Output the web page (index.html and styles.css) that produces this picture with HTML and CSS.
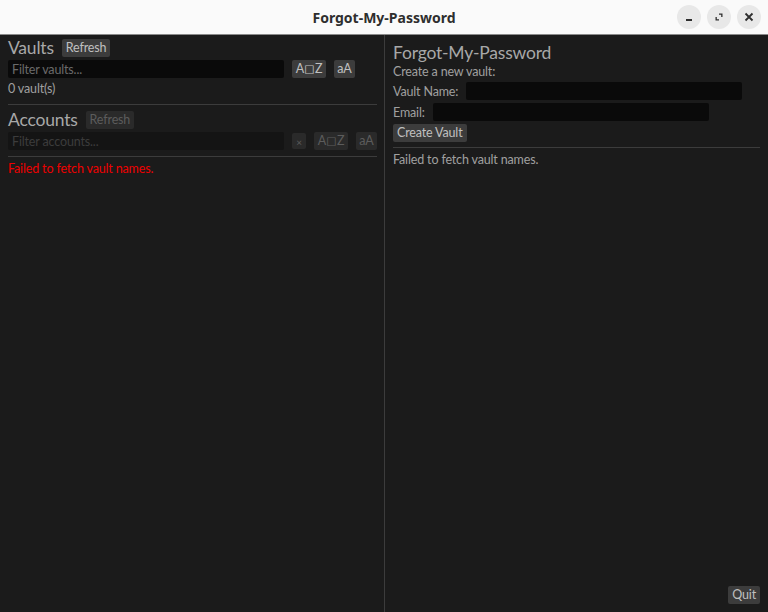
FILE: index.html
```html
<!DOCTYPE html>
<html>
   <head>
      <meta name="viewport" content="width=device-width, initial-scale=1.0"/>
      <link rel="stylesheet" href="styles.css">
   </head>
   <body>
      <!--window title bar-->
      <div class="titlebar">
         <div></div>
         <div class="title">Forgot-My-Password</div>
         <div class="controls">
            <span class="ctl">
               <svg width="10" height="10" viewBox="0 0 10 10"><rect x="2" y="7" width="6" height="2" fill="#2e2e2e"/></svg>
            </span>
            <span class="ctl">
               <svg width="10" height="10" viewBox="0 0 10 10"><path d="M5 1.5H8.5V5L7.2 5V2.8H5Z M5 8.5H1.5V5L2.8 5V7.2H5Z" fill="#2e2e2e"/></svg>
            </span>
            <span class="ctl">
               <svg width="10" height="10" viewBox="0 0 10 10"><path d="M1.5 1.5L8.5 8.5M8.5 1.5L1.5 8.5" stroke="#2e2e2e" stroke-width="1.8"/></svg>
            </span>
         </div>
      </div>
      <div class="main">
         <!--left side: vaults and accounts-->
         <div class="side">
            <div class="row">
               <span class="heading">Vaults</span>
               <button class="btn">Refresh</button>
            </div>
            <div class="row">
               <input class="field" placeholder="Filter vaults...">
               <button class="btn sort">A&#9723;Z</button>
               <button class="btn case">aA</button>
            </div>
            <div class="label">0 vault(s)</div>
            <div class="sep sep1"></div>
            <div class="row">
               <span class="heading">Accounts</span>
               <button class="btn off">Refresh</button>
            </div>
            <div class="row">
               <input class="field" placeholder="Filter accounts..." disabled>
               <button class="btn off small">&times;</button>
               <button class="btn off sort">A&#9723;Z</button>
               <button class="btn off case">aA</button>
            </div>
            <div class="sep sep2"></div>
            <div class="label error">Failed to fetch vault names.</div>
         </div>
         <!--right side: create vault-->
         <div class="central">
            <div class="row">
               <span class="heading">Forgot-My-Password</span>
            </div>
            <div class="label short">Create a new vault:</div>
            <div class="row">
               <span class="label">Vault Name:</span>
               <input class="field">
            </div>
            <div class="row">
               <span class="label">Email:</span>
               <input class="field">
            </div>
            <div class="row">
               <button class="btn">Create Vault</button>
            </div>
            <div class="sep sep3"></div>
            <div class="label">Failed to fetch vault names.</div>
            <button class="btn quit">Quit</button>
         </div>
      </div>
   </body>
</html>
```

FILE: styles.css
```css
body {
margin: 0;
width: 768px;
height: 612px;
overflow: hidden;
background: #1b1b1b;
font-family: "Lato", "Liberation Sans", sans-serif;
font-size: 12.5px;
letter-spacing: -0.15px;
color: #a0a0a0;
}
.titlebar {
display: grid;
grid-template-columns: 1fr auto 1fr;
align-items: center;
height: 34px;
background: #fafafa;
border-bottom: 1px solid #8a8a8a;
letter-spacing: 0;
}
.title {
font-family: "Noto Sans", sans-serif;
font-weight: bold;
font-size: 14px;
color: #2e2e2e;
}
.controls {
justify-self: end;
display: flex;
gap: 6px;
padding-right: 7px;
}
.ctl {
width: 24px;
height: 24px;
border-radius: 50%;
background: #e8e8e8;
display: flex;
align-items: center;
justify-content: center;
}
.main {
display: flex;
height: 577px;
}
.side {
width: 369px;
padding: 4px 7px 0 8px;
border-right: 1px solid #3c3c3c;
display: flex;
flex-direction: column;
gap: 3px;
}
.central {
flex: 1;
padding: 9px 8px 8px 8px;
display: flex;
flex-direction: column;
gap: 3px;
}
.row {
display: flex;
align-items: center;
gap: 8px;
height: 18px;
}
.heading {
font-size: 17.5px;
line-height: 18px;
letter-spacing: -0.2px;
color: #a8a8a8;
}
.label {
height: 15px;
line-height: 15px;
white-space: nowrap;
}
.label.short {
height: 14px;
line-height: 14px;
}
.error {
color: #ee0000;
}
.btn {
flex-shrink: 0;
height: 18px;
padding: 0 4px;
border: none;
border-radius: 2px;
background: #3c3c3c;
color: #c0c0c0;
font-family: inherit;
font-size: 12.5px;
letter-spacing: -0.15px;
line-height: 18px;
}
.btn.sort {
width: 34px;
padding: 0;
text-align: center;
}
.btn.case {
width: 21px;
padding: 0;
text-align: center;
}
.btn.off {
background: #2a2a2a;
color: #5c5c5c;
}
.btn.small {
font-size: 10px;
width: 14px;
padding: 0;
height: 16px;
}
.field {
flex-shrink: 0;
width: 276px;
height: 18px;
box-sizing: border-box;
padding: 0 4px;
border: none;
border-radius: 2px;
background: #0a0a0a;
color: #a0a0a0;
font-family: inherit;
font-size: 12.5px;
letter-spacing: -0.15px;
outline: none;
}
.field::placeholder {
color: #6a6a6a;
}
.field:disabled {
background: #141414;
}
.field:disabled::placeholder {
color: #3c3c3c;
}
.sep {
height: 1px;
background: #3c3c3c;
flex-shrink: 0;
}
.sep1 {
margin: 5px 0 3px 0;
}
.sep2 {
margin: 3px 0 1px 0;
}
.sep3 {
margin: 2px 0 1px 0;
}
.quit {
margin-top: auto;
align-self: flex-end;
}
```
